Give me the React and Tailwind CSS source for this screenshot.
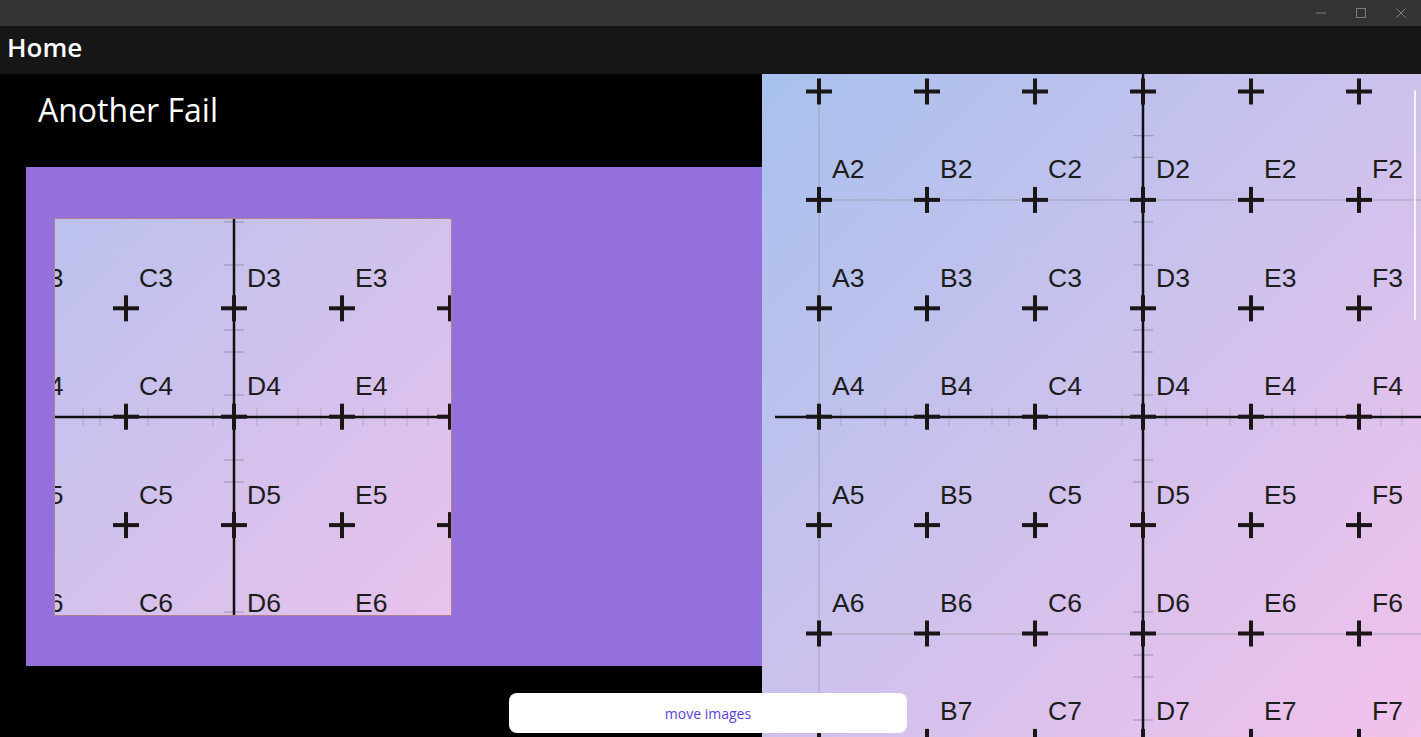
import React from "react";

const COLS = ["A", "B", "C", "D", "E", "F", "G"];
const colX = (i) => 819 + i * 108;
const rowY = (r) => 91.5 + (r - 1) * 108.4;

const VTICKS = [135.7, 157.3, 222, 265, 330, 352, 395, 460, 482, 612, 655, 677, 720];
const HTICKS = [841, 885, 906, 949, 992, 1009, 1057, 1122, 1166, 1207, 1230, 1272, 1294, 1316, 1337, 1381, 1402];

function GridArt({ id, className }) {
  const crosses = [];
  const labels = [];
  for (let r = 1; r <= 8; r++) {
    for (let c = 0; c < COLS.length; c++) {
      const x = colX(c);
      const y = rowY(r);
      crosses.push(
        <g key={`x${r}${c}`} fill="#1b1616">
          <rect x={x - 13} y={y - 2} width={26} height={4} />
          <rect x={x - 2} y={y - 13} width={4} height={26} />
        </g>
      );
      labels.push(
        <text
          key={`t${r}${c}`}
          x={x + 13}
          y={y - 21.5}
          fontSize="26.5"
          fill="#1c1c1c"
          style={{ fontFamily: '"Liberation Sans", Arial, sans-serif' }}
        >
          {COLS[c]}
          {r}
        </text>
      );
    }
  }
  return (
    <svg width={762} height={762} viewBox="762 36 762 762" className={className}>
      <defs>
        <linearGradient id={id} x1="0" y1="0" x2="1" y2="1">
          <stop offset="0" stopColor="#a6c1ee" />
          <stop offset="1" stopColor="#fbc2eb" />
        </linearGradient>
      </defs>
      <rect x={762} y={36} width={762} height={762} fill={`url(#${id})`} />
      {/* thin gray guide lines */}
      <line x1={819} y1={92} x2={819} y2={798} stroke="#9a9aa6" strokeWidth="1" opacity="0.75" />
      <line x1={819} y1={200} x2={1524} y2={200} stroke="#9a9aa6" strokeWidth="1" opacity="0.75" />
      <line x1={819} y1={634} x2={1524} y2={634} stroke="#9a9aa6" strokeWidth="1" opacity="0.75" />
      {/* ticks */}
      {VTICKS.map((y) => (
        <line key={`vt${y}`} x1={1133} y1={y} x2={1153} y2={y} stroke="#6c6c78" strokeWidth="1" opacity="0.55" />
      ))}
      {HTICKS.map((x) => (
        <line key={`ht${x}`} x1={x} y1={408} x2={x} y2={426} stroke="#7a7a86" strokeWidth="1" opacity="0.35" />
      ))}
      {/* axes */}
      <line x1={1143} y1={49} x2={1143} y2={798} stroke="#111" strokeWidth="2.5" />
      <line x1={775} y1={417} x2={1524} y2={417} stroke="#111" strokeWidth="2.5" />
      {crosses}
      {labels}
    </svg>
  );
}

export default function App() {
  return (
    <div
      className="relative flex h-[737px] w-full flex-col overflow-hidden bg-black"
      style={{ fontFamily: '"Open Sans", "Noto Sans", sans-serif' }}
    >
      {/* title bar */}
      <div className="flex h-[26px] shrink-0 items-center justify-end bg-[#333333]">
        <div className="flex h-full items-center">
          <div className="flex h-full w-[40px] items-center justify-center">
            <svg width="10" height="10" viewBox="0 0 10 10">
              <line x1="0" y1="5" x2="10" y2="5" stroke="#7d7d7d" strokeWidth="1" />
            </svg>
          </div>
          <div className="flex h-full w-[40px] items-center justify-center">
            <svg width="10" height="10" viewBox="0 0 10 10">
              <rect x="0.5" y="0.5" width="9" height="9" fill="none" stroke="#7d7d7d" strokeWidth="1" />
            </svg>
          </div>
          <div className="flex h-full w-[40px] items-center justify-center">
            <svg width="10" height="10" viewBox="0 0 10 10">
              <path d="M0.5 0.5 L9.5 9.5 M9.5 0.5 L0.5 9.5" stroke="#7d7d7d" strokeWidth="1" />
            </svg>
          </div>
        </div>
      </div>

      {/* header */}
      <div className="flex h-[48px] shrink-0 items-start bg-[#161616] pl-[7px] pt-[8px]">
        <span className="text-[26px] font-semibold leading-[26px] text-white">Home</span>
      </div>

      {/* main */}
      <div className="relative flex flex-1 flex-col">
        <div className="h-[93px] shrink-0 pl-[38px] pt-[20px]">
          <h1 className="text-[32px] font-normal leading-[32px] text-white">Another Fail</h1>
        </div>

        <div className="ml-[26px] h-[499px] w-[736px] shrink-0 bg-[#9370db] pl-[28px] pt-[51px]">
          <div className="relative h-[398px] w-[398px] overflow-hidden border border-[#b0808e]">
            <GridArt id="gsmall" className="absolute left-[-202px] top-[-183px] max-w-none" />
          </div>
        </div>

        {/* big image overlay */}
        <div className="absolute bottom-0 left-[762px] right-0 top-0 overflow-hidden">
          <GridArt id="gbig" className="absolute left-0 top-[-38px] max-w-none" />
        </div>

        <div className="relative z-10 ml-[509px] mt-[27px]">
          <button className="flex h-[40px] w-[398px] items-center justify-center rounded-[8px] bg-white text-[14px] text-[#5a3fd8]">
            move images
          </button>
        </div>
      </div>

      {/* overlay scrollbar */}
      <div className="absolute left-[1414px] top-[90px] h-[230px] w-[2px] rounded-full bg-white/80" />
    </div>
  );
}
